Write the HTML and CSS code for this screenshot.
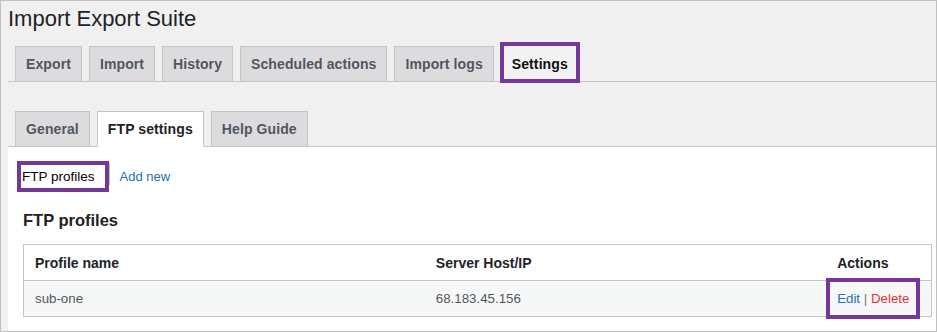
FILE: index.html
```html
<!DOCTYPE html>
<html>
<head>
<meta charset="utf-8">
<link rel="stylesheet" href="styles.css">
</head>
<body>
<div class="frame">
  <h1 class="title">Import Export Suite</h1>
  <nav class="tabs primary">
    <a class="tab">Export</a>
    <a class="tab">Import</a>
    <a class="tab">History</a>
    <a class="tab">Scheduled actions</a>
    <a class="tab">Import logs</a>
    <a class="tab tab-marked">Settings</a>
  </nav>
  <nav class="tabs secondary">
    <a class="tab">General</a>
    <a class="tab tab-active">FTP settings</a>
    <a class="tab">Help Guide</a>
  </nav>
  <div class="panel">
    <div class="subnav">
      <span class="subnav-current">FTP profiles</span>
      <span class="subnav-sep"></span>
      <a class="subnav-link">Add new</a>
    </div>
    <div class="section">
      <h2 class="heading">FTP profiles</h2>
      <table class="list">
        <colgroup>
          <col class="col-name">
          <col class="col-host">
          <col class="col-actions">
        </colgroup>
        <thead>
          <tr><th>Profile name</th><th>Server Host/IP</th><th>Actions</th></tr>
        </thead>
        <tbody>
          <tr>
            <td>sub-one</td>
            <td>68.183.45.156</td>
            <td><span class="mark"><a class="edit">Edit</a> <span class="pipe">|</span> <a class="delete">Delete</a></span></td>
          </tr>
        </tbody>
      </table>
    </div>
  </div>
</div>
</body>
</html>
```

FILE: styles.css
```css
* { box-sizing: border-box; }
html, body { margin: 0; padding: 0; background: #ffffff; }
body { font-family: "Liberation Sans", Arial, sans-serif; }

.frame {
  width: 937px;
  height: 332px;
  border: 1px solid #c0c0c0;
  background: #f0f0f0;
  padding: 4px 0 0 7px;
  overflow: hidden;
  display: flex;
  flex-direction: column;
}

.title {
  margin: 0;
  font-size: 22px;
  line-height: 28px;
  font-weight: 400;
  color: #1d2327;
  white-space: nowrap;
}

.tabs {
  display: flex;
  align-items: flex-end;
  border-bottom: 1px solid #c3c4c7;
}
.primary { margin-top: 9px; height: 40px; }
.secondary { margin-top: 29px; height: 36px; }

.tab {
  display: block;
  margin-left: 7px;
  padding: 5px 10px;
  border: 1px solid #c3c4c7;
  border-bottom: none;
  background: #dcdcde;
  color: #50575e;
  font-size: 14px;
  font-weight: 700;
  line-height: 24px;
  letter-spacing: 0.1px;
  white-space: nowrap;
}

.tab-marked {
  margin-left: 6px;
  margin-bottom: -2px;
  padding: 6px 8px 3px;
  border: 4px solid #76379b;
  background: #f2f2f2;
  color: #101010;
}

.tab-active {
  background: #ffffff;
  color: #1d2327;
  border-bottom: 1px solid #ffffff;
  margin-bottom: -1px;
}

.panel {
  flex: 1;
  background: #ffffff;
  padding-top: 14px;
}

.subnav {
  display: flex;
  align-items: center;
  padding-left: 9px;
  height: 31px;
  font-size: 13.5px;
}
.subnav-current {
  display: block;
  height: 31px;
  line-height: 23px;
  padding: 0 10px 0 1px;
  border: 4px solid #76379b;
  color: #000000;
}
.subnav-sep {
  display: block;
  width: 1px;
  height: 22px;
  background: #c3c4c7;
  align-self: flex-start;
  margin-top: 2px;
}
.subnav-link {
  margin-left: 10px;
  color: #2271b1;
  font-size: 13px;
}

.section {
  padding: 0 4px 0 15px;
}

.heading {
  margin: 18px 0 14px;
  font-size: 16.5px;
  line-height: 20px;
  font-weight: 700;
  color: #1d2327;
}

.list {
  width: 100%;
  table-layout: fixed;
  border-collapse: collapse;
  border: 1px solid #c3c4c7;
}
.col-name, .col-host { width: 44.2%; }

.list th {
  text-align: left;
  padding: 9px 11px 8px;
  line-height: 18px;
  font-size: 14px;
  font-weight: 700;
  color: #1d2327;
  background: #ffffff;
  border-bottom: 1px solid #c3c4c7;
}
.list td {
  padding: 8px 11px;
  line-height: 19px;
  font-size: 13.3px;
  color: #50575e;
  background: #f6f7f7;
  white-space: nowrap;
}

.mark {
  display: inline-block;
  outline: 4px solid #76379b;
  outline-offset: 7px;
}
.edit { color: #2271b1; }
.pipe { color: #787c82; }
.delete { color: #e6323a; }
```
